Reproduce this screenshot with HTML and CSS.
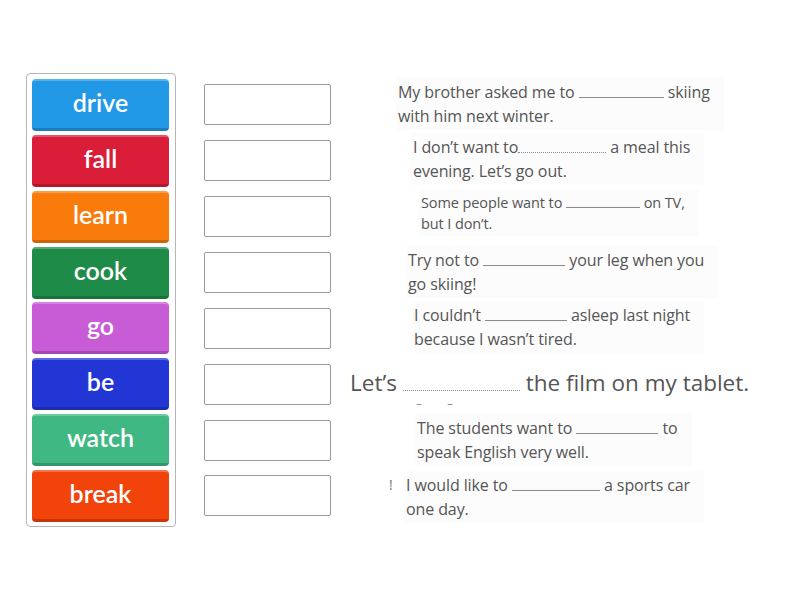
FILE: index.html
```html
<!DOCTYPE html>
<html>
<head>
    <title>Match up</title>
    <link rel="stylesheet" href="styles.css">
</head>
<body>
    <div class="game">
        <!-- word tiles -->
        <div class="tiles">
            <div class="tile drive">drive</div>
            <div class="tile fall">fall</div>
            <div class="tile learn">learn</div>
            <div class="tile cook">cook</div>
            <div class="tile go">go</div>
            <div class="tile be">be</div>
            <div class="tile watch">watch</div>
            <div class="tile break">break</div>
        </div>

        <!-- empty drop boxes -->
        <div class="slots">
            <div class="slot-row"><div class="slot"></div></div>
            <div class="slot-row"><div class="slot"></div></div>
            <div class="slot-row"><div class="slot"></div></div>
            <div class="slot-row"><div class="slot"></div></div>
            <div class="slot-row"><div class="slot"></div></div>
            <div class="slot-row"><div class="slot"></div></div>
            <div class="slot-row"><div class="slot"></div></div>
            <div class="slot-row"><div class="slot"></div></div>
        </div>

        <!-- sentence pictures -->
        <div class="sentences">
            <div class="sentence-row">
                <div class="sentence s1">My brother asked me to <span class="blank b1"></span> skiing<br>with him next winter.</div>
            </div>
            <div class="sentence-row">
                <div class="sentence s2">I don’t want to<span class="blank dotted b2"></span> a meal this<br>evening. Let’s go out.</div>
            </div>
            <div class="sentence-row">
                <div class="sentence small s3">Some people want to <span class="blank b3"></span> on TV,<br>but I don’t.</div>
            </div>
            <div class="sentence-row">
                <div class="sentence s4">Try not to <span class="blank b4"></span> your leg when you<br>go skiing!</div>
            </div>
            <div class="sentence-row">
                <div class="sentence s5">I couldn’t <span class="blank b4"></span> asleep last night<br>because I wasn’t tired.</div>
            </div>
            <div class="sentence-row">
                <div class="sentence big s6">Let’s <span class="blank dotted b6"></span> the film on my tablet.</div>
            </div>
            <div class="sentence-row">
                <div class="sentence s7"><span class="marks">‾ &nbsp; &nbsp; &nbsp; &nbsp; ‾</span>The students want to <span class="blank b4"></span> to<br>speak English very well.</div>
            </div>
            <div class="sentence-row">
                <div class="sentence s8"><span class="num">!</span>I would like to <span class="blank b2"></span> a sports car<br>one day.</div>
            </div>
        </div>
    </div>
</body>
</html>
```

FILE: styles.css
```css
/* page */
body {
    margin: 0;
    background-color: #ffffff;
    font-family: "Open Sans", Arial, sans-serif;
}
.game {
    display: flex;
    align-items: flex-start;
    padding: 73px 0 0 26px;
}

/* tiles panel */
.tiles {
    display: flex;
    flex-direction: column;
    gap: 3.86px;
    padding: 5px 6px 4px 5px;
    border: 1px solid #b5b5b5;
    border-radius: 4px;
}
.tile {
    width: 137px;
    height: 52px;
    box-sizing: border-box;
    border-radius: 4px;
    color: white;
    font-family: Lato, "Open Sans", sans-serif;
    font-size: 25px;
    font-weight: 600;
    line-height: 43px;
    text-align: center;
    border-top: 2px solid rgba(255, 255, 255, 0.25);
    border-bottom: 3px solid rgba(0, 0, 0, 0.18);
}
.tile.drive { background-color: #2299e6; }
.tile.fall { background-color: #da1d38; }
.tile.learn { background-color: #f97b0c; }
.tile.cook { background-color: #1f8b48; }
.tile.go { background-color: #c85bd6; }
.tile.be { background-color: #2236d6; }
.tile.watch { background-color: #3fb883; }
.tile.break { background-color: #f2430b; }

/* drop boxes */
.slots {
    display: flex;
    flex-direction: column;
    margin-left: 28px;
    padding-top: 4px;
}
.slot-row {
    height: 55.86px;
    display: flex;
    align-items: center;
}
.slot {
    width: 127px;
    height: 41px;
    box-sizing: border-box;
    border: 1px solid #9a9a9a;
    border-radius: 2px;
}

/* sentences */
.sentences {
    display: flex;
    flex-direction: column;
    margin-left: 59px;
    padding-top: 3px;
}
.sentence-row {
    height: 55.86px;
    display: flex;
    align-items: center;
}
.sentence {
    position: relative;
    color: #555555;
    font-size: 16px;
    line-height: 24px;
    letter-spacing: -0.1px;
    background-color: #fcfcfc;
    padding: 2px 14px 2px 2px;
    white-space: nowrap;
}
.sentence.small {
    font-size: 14.5px;
    line-height: 21px;
}
.sentence.big {
    font-size: 22.5px;
    line-height: 30px;
    letter-spacing: 0;
}
.blank {
    display: inline-block;
    height: 1px;
    border-bottom: 1px solid #8a8a8a;
    vertical-align: baseline;
}
.blank.dotted {
    border-bottom: 1px dotted #8a8a8a;
}
.b1 { width: 85px; }
.b2 { width: 88px; }
.b3 { width: 74px; }
.b4 { width: 82px; }
.b6 { width: 117px; }

.s1 { margin-left: 6px; }
.s2 { margin-left: 21px; margin-top: -2px; }
.s3 { margin-left: 29px; margin-top: -6px; }
.s4 { margin-left: 16px; }
.s5 { margin-left: 22px; }
.s6 { margin-left: -42px; background-color: transparent; }
.s7 { margin-left: 25px; margin-top: 2px; }
.s8 { margin-left: 14px; margin-top: 5px; }

.marks {
    position: absolute;
    left: 2px;
    top: -16px;
    font-size: 12px;
    color: #777;
}
.num {
    position: absolute;
    left: -15px;
    top: 2px;
    color: #777;
    font-size: 14px;
}
```
